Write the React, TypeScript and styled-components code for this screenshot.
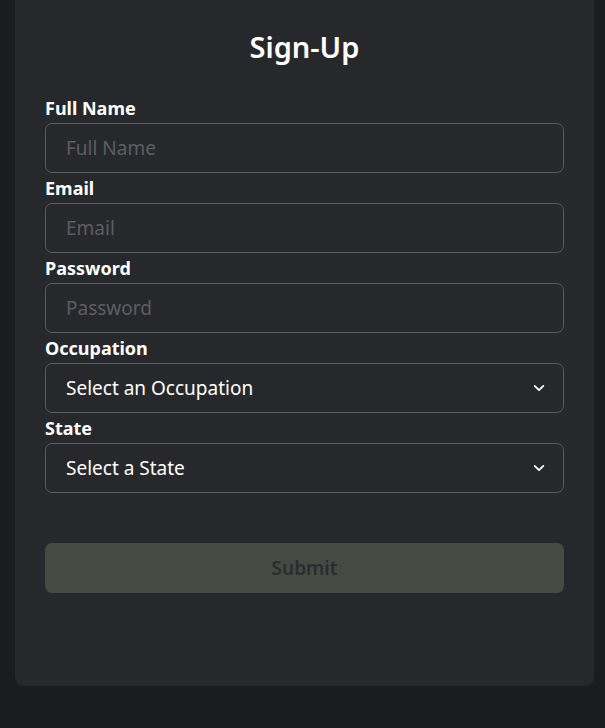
import styled, { createGlobalStyle } from "styled-components";
import { useState } from "react";

const GlobalStyle = createGlobalStyle`
  html, body {
    margin: 0;
    padding: 0;
    background: #1b1c20;
    font-family: "Noto Sans", "Open Sans", sans-serif;
  }
  * {
    box-sizing: border-box;
  }
`;

const Chevron = () => (
  <svg width="14" height="14" viewBox="0 0 16 16" fill="none">
    <path
      d="M3 5.5l5 5 5-5"
      stroke="#ffffff"
      strokeWidth="2"
      strokeLinecap="round"
      strokeLinejoin="round"
    />
  </svg>
);

const App = () => {
  const [form, setForm] = useState({
    fullName: "",
    email: "",
    password: "",
    occupation: "",
    state: "",
  });

  const onChange = (key: keyof typeof form, value: string) => {
    setForm({ ...form, [key]: value });
  };

  const isReady = Object.values(form).every((v) => v !== "");

  return (
    <Page>
      <GlobalStyle />
      <Card>
        <Title>Sign-Up</Title>
        <Form onSubmit={(e) => e.preventDefault()}>
          <Field>
            <Label htmlFor="fullName">Full Name</Label>
            <Input
              id="fullName"
              placeholder="Full Name"
              autoFocus
              value={form.fullName}
              onChange={(e) => onChange("fullName", e.target.value)}
            />
          </Field>
          <Field>
            <Label htmlFor="email">Email</Label>
            <Input
              id="email"
              type="email"
              placeholder="Email"
              value={form.email}
              onChange={(e) => onChange("email", e.target.value)}
            />
          </Field>
          <Field>
            <Label htmlFor="password">Password</Label>
            <Input
              id="password"
              type="password"
              placeholder="Password"
              value={form.password}
              onChange={(e) => onChange("password", e.target.value)}
            />
          </Field>
          <Field>
            <Label htmlFor="occupation">Occupation</Label>
            <SelectWrapper>
              <Select
                id="occupation"
                value={form.occupation}
                onChange={(e) => onChange("occupation", e.target.value)}
              >
                <option value="">Select an Occupation</option>
                <option value="developer">Developer</option>
                <option value="designer">Designer</option>
              </Select>
              <ChevronBox>
                <Chevron />
              </ChevronBox>
            </SelectWrapper>
          </Field>
          <Field>
            <Label htmlFor="state">State</Label>
            <SelectWrapper>
              <Select
                id="state"
                value={form.state}
                onChange={(e) => onChange("state", e.target.value)}
              >
                <option value="">Select a State</option>
                <option value="CA">California</option>
                <option value="NY">New York</option>
              </Select>
              <ChevronBox>
                <Chevron />
              </ChevronBox>
            </SelectWrapper>
          </Field>
          <SubmitButton type="submit" disabled={!isReady}>
            Submit
          </SubmitButton>
        </Form>
      </Card>
    </Page>
  );
};

const Page = styled.div`
  min-height: 728px;
  padding: 0 11px 0 15px;
`;

const Card = styled.div`
  background: #27282c;
  border-radius: 0 0 9px 9px;
  padding: 26px 30px 93px;
`;

const Title = styled.h1`
  margin: 0 0 25px;
  text-align: center;
  color: #ffffff;
  font-size: 29px;
  font-weight: 600;
  line-height: 42px;
`;

const Form = styled.form`
  display: flex;
  flex-direction: column;
`;

const Field = styled.div`
  display: flex;
  flex-direction: column;
`;

const Label = styled.label`
  color: #ffffff;
  font-size: 18px;
  font-weight: 700;
  line-height: 30px;
`;

const Input = styled.input`
  height: 50px;
  width: 100%;
  padding: 0 20px;
  background: #27282c;
  border: 1px solid #5b5c60;
  border-radius: 7px;
  color: #ffffff;
  font-family: inherit;
  font-size: 19px;
  outline: none;
  caret-color: #ffffff;

  &::placeholder {
    color: #5c5e64;
  }
`;

const SelectWrapper = styled.div`
  position: relative;
`;

const Select = styled.select`
  appearance: none;
  height: 50px;
  width: 100%;
  padding: 0 20px;
  background: #27282c;
  border: 1px solid #5b5c60;
  border-radius: 7px;
  color: #ffffff;
  font-family: inherit;
  font-size: 19px;
  outline: none;
  cursor: pointer;
`;

const ChevronBox = styled.span`
  position: absolute;
  right: 18px;
  top: 50%;
  transform: translateY(-50%);
  display: flex;
  pointer-events: none;
`;

const SubmitButton = styled.button`
  margin-top: 50px;
  height: 50px;
  width: 100%;
  border: none;
  border-radius: 7px;
  background: #474a42;
  color: #2b2c30;
  font-family: inherit;
  font-size: 19px;
  font-weight: 600;
  cursor: pointer;

  &:disabled {
    cursor: not-allowed;
  }
`;

export default App;
